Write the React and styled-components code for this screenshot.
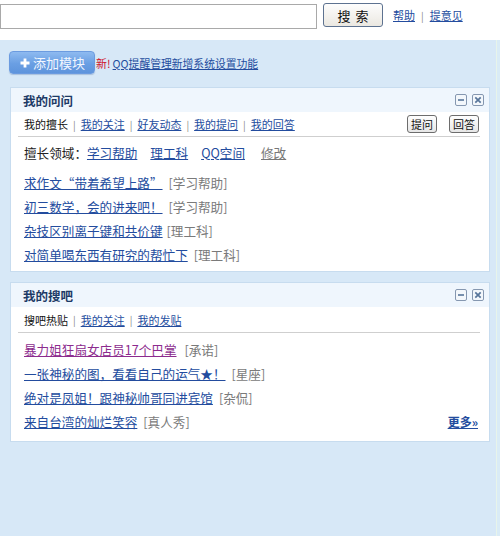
import React from "react";
import styled, { createGlobalStyle } from "styled-components";

const Global = createGlobalStyle`
  html, body, #root { height: 100%; }
  body {
    margin: 0;
    background: #fff;
    font-family: "Noto Sans CJK SC", "Noto Sans", sans-serif;
    color: #222;
  }
  * { box-sizing: border-box; }
`;

const Page = styled.div`
  min-height: 100vh;
  display: flex;
  flex-direction: column;
`;

const TopBar = styled.div`
  height: 40px;
  background: #fff;
  display: flex;
  align-items: flex-start;
  padding-top: 3px;
`;

const SearchInput = styled.input`
  width: 317px;
  height: 25px;
  margin: 1px 6px 0 0;
  border: 1px solid #a9a9a9;
  background: #fff;
  outline: none;
`;

const SearchButton = styled.button`
  width: 60px;
  height: 24px;
  border: 1px solid #5d7290;
  border-radius: 3px;
  background: linear-gradient(#fdfdfd, #ebe8e1);
  font-family: inherit;
  font-size: 13px;
  letter-spacing: 5px;
  padding: 0 0 0 5px;
  color: #111;
  margin-right: 10px;
`;

const TopLinks = styled.div`
  display: flex;
  align-items: center;
  height: 24px;
  font-size: 11px;
`;

const Link = styled.a`
  color: ${(p) => p.$color || "#234c9e"};
  text-decoration: underline;
  cursor: pointer;
  font-weight: ${(p) => (p.$bold ? "bold" : "normal")};
`;

const NoticeLink = styled(Link)`
  font-size: 10.8px;
`;

const Sep = styled.span`
  color: #8a8a8a;
  margin: 0 ${(p) => p.$gap || 5}px;
  font-size: 10px;
`;

const Main = styled.div`
  flex: 1;
  background: #d7e8f7;
  padding: 11px 10px 20px 10px;
  box-shadow: inset -3px 0 0 #d9ebf6, inset -4px 0 0 #e8f4ea;
`;

const AddRow = styled.div`
  display: flex;
  align-items: center;
  height: 23px;
  margin-left: -1px;
  margin-bottom: 13px;
`;

const AddButton = styled.button`
  width: 86px;
  height: 23px;
  border: 1px solid #6b9be0;
  border-radius: 4px;
  background: linear-gradient(#8ebaf0, #6a9fe3 55%, #5e94dc);
  color: #f2f7ff;
  font-family: inherit;
  font-size: 13px;
  display: flex;
  align-items: center;
  padding: 0 0 0 10px;
  gap: 3px;
  box-shadow: 0 1px 1px rgba(60, 100, 160, 0.3);
`;

const NewMark = styled.span`
  color: #d0102a;
  font-size: 11px;
  margin: 0 2px 0 1px;
`;

const Panel = styled.section`
  background: #fff;
  border: 1px solid #c7dcef;
  margin-bottom: 10px;
`;

const PanelHeader = styled.div`
  height: 24px;
  background: #eff6fd;
  display: flex;
  align-items: center;
  justify-content: space-between;
  padding: 0 5px 0 12px;
`;

const Title = styled.h3`
  margin: 0;
  font-size: 12.5px;
  font-weight: bold;
  color: #1d3a66;
`;

const HeaderTools = styled.div`
  display: flex;
  gap: 5px;
  margin-top: -1px;
`;

const PanelBody = styled.div`
  padding: 0 9px ${(p) => p.$pb || 5}px 7px;
`;

const TabRow = styled.div`
  height: ${(p) => p.$h || 25}px;
  border-bottom: 1px solid #cfcfcf;
  display: flex;
  align-items: center;
  padding-left: 6px;
  font-size: 11px;
`;

const TabCurrent = styled.span`
  color: #111;
`;

const TabActions = styled.div`
  margin-left: auto;
  display: flex;
  gap: 12px;
  margin-right: 1px;
`;

const SmallButton = styled.button`
  width: 30px;
  height: 18px;
  border: 1px solid #6d6d6d;
  border-radius: 3px;
  background: linear-gradient(#fefefe, #e6e6e6);
  font-family: inherit;
  font-size: 11px;
  color: #111;
  padding: 0;
`;

const DomainRow = styled.div`
  height: 30px;
  display: flex;
  align-items: center;
  padding-left: 6px;
  font-size: 12.6px;
  margin-bottom: 3px;
`;

const DomainLabel = styled.span`
  color: #222;
`;

const DomainLink = styled(Link)`
  margin-right: ${(p) => p.$mr || 13}px;
`;

const ItemList = styled.ul`
  list-style: none;
  margin: 0;
  padding: ${(p) => p.$pt || 0}px 0 0 6px;
`;

const Item = styled.li`
  height: 24px;
  display: flex;
  align-items: center;
  font-size: 12.6px;
  white-space: nowrap;
`;

const Tag = styled.span`
  color: #7a7a7a;
  margin-left: ${(p) => p.$ml || 8}px;
`;

const More = styled(Link)`
  margin-left: auto;
  margin-right: 2px;
  font-size: 12px;
`;

function MinIcon() {
  return (
    <svg width="12" height="12" viewBox="0 0 12 12">
      <rect x="0.5" y="0.5" width="11" height="11" rx="1.5" fill="#f3f7fb" stroke="#8597b0" />
      <rect x="3" y="5.2" width="6" height="1.6" fill="#57759a" />
    </svg>
  );
}

function CloseIcon() {
  return (
    <svg width="12" height="12" viewBox="0 0 12 12">
      <rect x="0.5" y="0.5" width="11" height="11" rx="1.5" fill="#f3f7fb" stroke="#8597b0" />
      <path d="M3.3 3.3 L8.7 8.7 M8.7 3.3 L3.3 8.7" stroke="#57759a" strokeWidth="1.7" />
    </svg>
  );
}

function PlusIcon() {
  return (
    <svg width="10" height="10" viewBox="0 0 10 10">
      <path d="M3.6 0.5h2.8v3.1h3.1v2.8H6.4v3.1H3.6V6.4H0.5V3.6h3.1z" fill="#fff" />
    </svg>
  );
}

const wenItems = [
  { t: "求作文“带着希望上路” ", tag: "[学习帮助]" },
  { t: "初三数学，会的进来吧！ ", tag: "[学习帮助]" },
  { t: "杂技区别离子键和共价键", tag: "[理工科]", ml: 4 },
  { t: "对简单喝东西有研究的帮忙下", tag: "[理工科]" },
];

const souItems = [
  { t: "暴力姐狂扇女店员17个巴掌", tag: "[承诺]", color: "#8c2b8e" },
  { t: "一张神秘的图，看看自己的运气★！ ", tag: "[星座]" },
  { t: "绝对是凤姐！跟神秘帅哥同进宾馆", tag: "[杂侃]" },
  { t: "来自台湾的灿烂笑容", tag: "[真人秀]", more: true },
];

function Tabs({ items, actions, h }) {
  return (
    <TabRow $h={h}>
      {items.map((it, i) => (
        <React.Fragment key={it}>
          {i > 0 && <Sep>|</Sep>}
          {i === 0 ? <TabCurrent>{it}</TabCurrent> : <Link>{it}</Link>}
        </React.Fragment>
      ))}
      {actions && (
        <TabActions>
          {actions.map((a) => (
            <SmallButton key={a}>{a}</SmallButton>
          ))}
        </TabActions>
      )}
    </TabRow>
  );
}

function PanelHead({ title }) {
  return (
    <PanelHeader>
      <Title>{title}</Title>
      <HeaderTools>
        <MinIcon />
        <CloseIcon />
      </HeaderTools>
    </PanelHeader>
  );
}

export default function App() {
  return (
    <Page>
      <Global />
      <TopBar>
        <SearchInput />
        <SearchButton>搜索</SearchButton>
        <TopLinks>
          <Link>帮助</Link>
          <Sep $gap={6}>|</Sep>
          <Link>提意见</Link>
        </TopLinks>
      </TopBar>
      <Main>
        <AddRow>
          <AddButton>
            <PlusIcon />
            添加模块
          </AddButton>
          <NewMark>新!</NewMark>
          <NoticeLink>QQ提醒管理新增系统设置功能</NoticeLink>
        </AddRow>

        <Panel>
          <PanelHead title="我的问问" />
          <PanelBody $pb={5}>
            <Tabs
              items={["我的擅长", "我的关注", "好友动态", "我的提问", "我的回答"]}
              actions={["提问", "回答"]}
            />
            <DomainRow>
              <DomainLabel>擅长领域：</DomainLabel>
              <DomainLink>学习帮助</DomainLink>
              <DomainLink>理工科</DomainLink>
              <DomainLink $mr={16}>QQ空间</DomainLink>
              <Link $color="#777">修改</Link>
            </DomainRow>
            <ItemList>
              {wenItems.map((it) => (
                <Item key={it.t}>
                  <Link>{it.t}</Link>
                  <Tag $ml={it.ml || 6}>{it.tag}</Tag>
                </Item>
              ))}
            </ItemList>
          </PanelBody>
        </Panel>

        <Panel>
          <PanelHead title="我的搜吧" />
          <PanelBody $pb={8}>
            <Tabs items={["搜吧热贴", "我的关注", "我的发贴"]} h={26} />
            <ItemList $pt={4}>
              {souItems.map((it) => (
                <Item key={it.t}>
                  <Link $color={it.color}>{it.t}</Link>
                  <Tag $ml={it.color ? 8 : 6}>{it.tag}</Tag>
                  {it.more && <More $bold>更多»</More>}
                </Item>
              ))}
            </ItemList>
          </PanelBody>
        </Panel>
      </Main>
    </Page>
  );
}
